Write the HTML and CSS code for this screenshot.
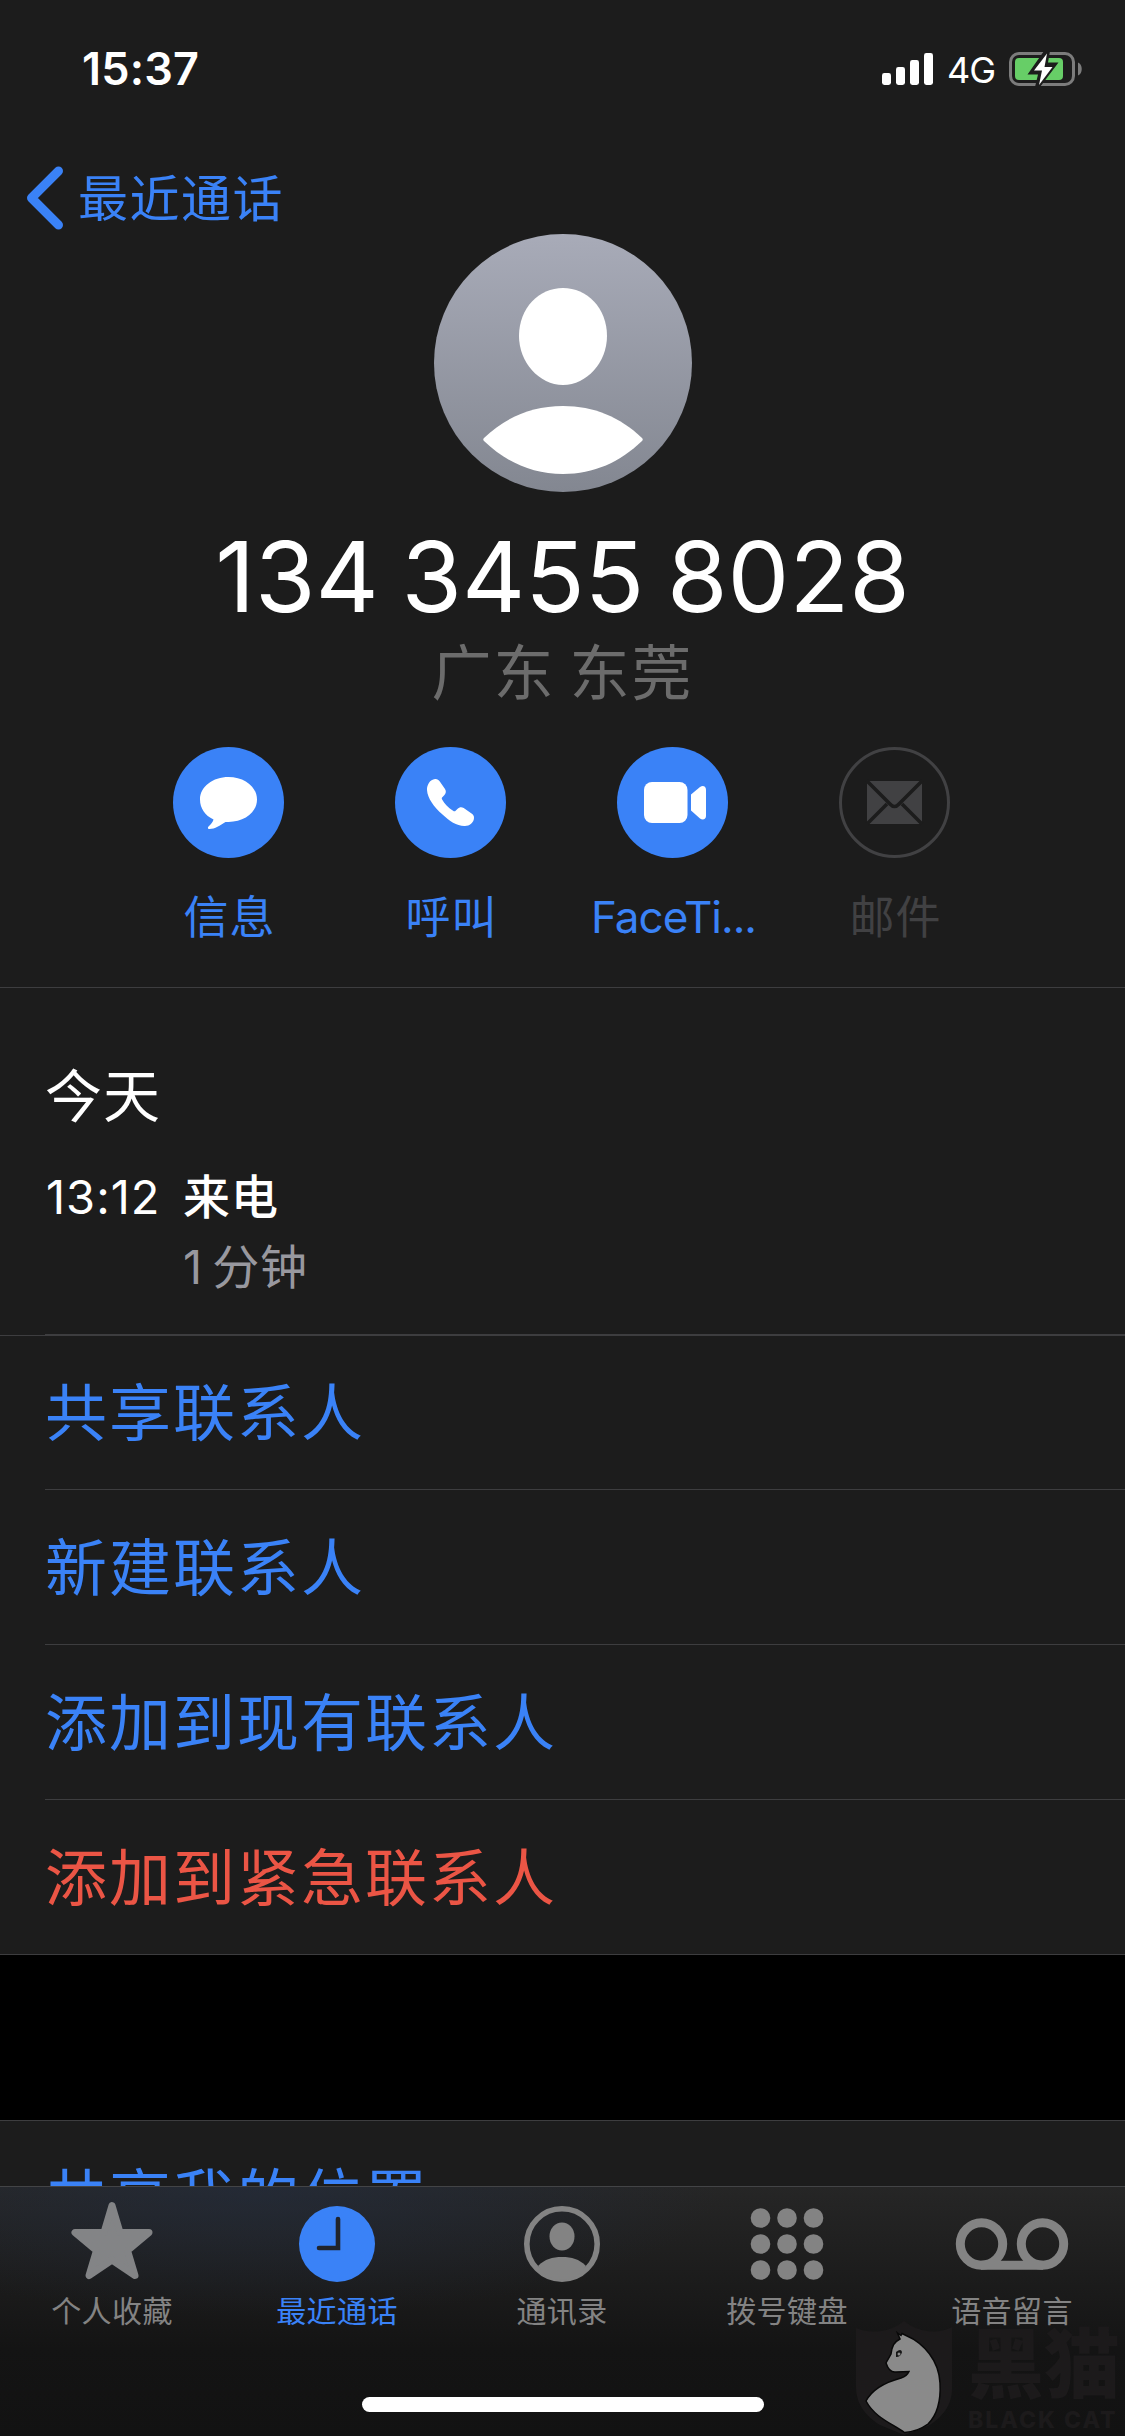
FILE: index.html
```html
<!DOCTYPE html>
<html lang="zh-CN">
<head>
<meta charset="utf-8">
<title>最近通话</title>
<link rel="stylesheet" href="styles.css">
</head>
<body>
<div class="phone">
  <header class="status">
    <span class="clock">15:37</span>
    <div class="status-right">
      <svg class="signal" width="51" height="32" viewBox="0 0 51 32" fill="#fff"><rect x="0" y="20" width="9" height="12" rx="2.4"/><rect x="14" y="14" width="9" height="18" rx="2.4"/><rect x="28" y="7" width="9" height="25" rx="2.4"/><rect x="42" y="0" width="9" height="32" rx="2.4"/></svg>
      <span class="network">4G</span>
      <svg class="battery" width="74" height="36" viewBox="0 0 74 36">
        <rect x="1.5" y="2.5" width="63" height="31" rx="8.5" fill="none" stroke="#7c7c7c" stroke-width="3"/>
        <path d="M69 11.5c5 2 5 11 0 13z" fill="#7c7c7c"/>
        <rect x="6" y="7" width="48" height="22" rx="4" fill="#67ce67"/>
        <path d="M35 0L18.500 23.500H29L26 36h5l18.500-24.500H39L41 0z" fill="#1c1c1c"/>
        <path d="M38 2.500L25 19.500h8L30 34l13.500-18h-8z" fill="#fff"/>
      </svg>
    </div>
  </header>

  <nav class="back">
    <svg width="38" height="64" viewBox="0 0 38 64" fill="none" stroke="#3a82f7" stroke-width="9" stroke-linecap="round" stroke-linejoin="round"><path d="M32.5 5L5.500 32l27 27"/></svg>
    <span>最近通话</span>
  </nav>

  <section class="profile">
    <svg class="avatar" width="258" height="258" viewBox="0 0 258 258">
      <defs><linearGradient id="av" x1="0" y1="0" x2="0" y2="1"><stop offset="0" stop-color="#a8abb8"/><stop offset="1" stop-color="#838791"/></linearGradient></defs>
      <circle cx="129" cy="129" r="129" fill="url(#av)"/>
      <path d="M129 54c24 0 44 20 44 48 0 26-20 49-44 49s-44-23-44-49c0-28 20-48 44-48z" fill="#fff"/>
      <path d="M50 204c22-21 48-32 79-32s57 11 79 32q1.500 1.500 0 3c-22 21-48 33-79 33s-57-12-79-33q-1.500-1.500 0-3z" fill="#fff"/>
    </svg>
    <h1 class="number">134 3455 8028</h1>
    <p class="place">广东 东莞</p>
    <div class="actions">
      <div class="action">
        <svg width="111" height="111" viewBox="0 0 111 111"><circle cx="55.500" cy="55.500" r="55.500" fill="#3a82f7"/><path d="M55.500 30C71 30 84 39.500 84 52.500S71 75 55.500 75h-3C47 78.500 42 82 36.500 82c-1.800 0-2-1.500-1-2.600C38 77 40 75 40.500 72.500 32 68.500 27 61 27 52.500 27 39.500 40 30 55.500 30z" fill="#fff"/></svg>
        <span>信息</span>
      </div>
      <div class="action">
        <svg width="111" height="111" viewBox="0 0 111 111"><circle cx="55.500" cy="55.500" r="55.500" fill="#3a82f7"/><path d="M40 32c2-.3 3.600.8 4.800 2.500l5.200 7.500c1.500 2.200 1 4.500-1 6.500l-1.700 1.700c-.7.800-.6 1.500-.2 2.300 2.400 4.500 6.500 8.500 11 11.300.9.600 1.700.8 2.500 0l1.800-1.700c2-2 4-2.500 6.300-1l7.500 5.200c2.200 1.600 2.900 2.500 2.800 4.700-.2 4.500-4.500 8-9 8-8 .3-15.500-5-22.500-11.500C39 60 32.500 51.500 32 43c-.2-5 3-10.600 8-11z" fill="#fff"/></svg>
        <span>呼叫</span>
      </div>
      <div class="action">
        <svg width="111" height="111" viewBox="0 0 111 111"><circle cx="55.500" cy="55.500" r="55.500" fill="#3a82f7"/><rect x="27" y="35" width="43.500" height="41" rx="8" fill="#fff"/><path d="M74 47.500l9-7.500c3-2.300 6-.5 6 2.500v26.500c0 3-3 4.500-6 2.500l-9-8z" fill="#fff"/></svg>
        <span class="latin">FaceTi...</span>
      </div>
      <div class="action disabled">
        <svg width="111" height="111" viewBox="0 0 111 111"><circle cx="55.500" cy="55.500" r="54" fill="none" stroke="#414143" stroke-width="3"/><rect x="28" y="34" width="55" height="43" rx="3" fill="#414143"/><path d="M27.500 33.500L51 57q4.500 5 9 0l23.500-23.500M28 77l20-20M83 77L63 57" fill="none" stroke="#1c1c1c" stroke-width="3.600"/></svg>
        <span>邮件</span>
      </div>
    </div>
  </section>

  <section class="history">
    <h2>今天</h2>
    <div class="call">
      <span class="time">13:12</span>
      <div class="call-info">
        <strong>来电</strong>
        <span class="duration"><span class="count">1</span>分钟</span>
      </div>
    </div>
  </section>

  <ul class="options">
    <li>共享联系人</li>
    <li>新建联系人</li>
    <li>添加到现有联系人</li>
    <li class="danger">添加到紧急联系人</li>
  </ul>

  <div class="gap"></div>
  <div class="location">共享我的位置</div>

  <footer class="tabs">
    <div class="tab-row">
      <div class="tab">
        <svg width="84" height="84" viewBox="0 0 84 84"><path d="M42 5.500L50 32.500H79L57.500 50.500 65 75.500 42 60 19 75.500 26.500 50.500 5 32.500H34z" fill="#838486" stroke="#838486" stroke-width="7" stroke-linejoin="round"/></svg>
        <span>个人收藏</span>
      </div>
      <div class="tab active">
        <svg width="84" height="84" viewBox="0 0 84 84"><circle cx="42" cy="44" r="38" fill="#3a82f7"/><path d="M43 19V48H24" fill="none" stroke="#20242c" stroke-width="4.600" stroke-linecap="round"/></svg>
        <span>最近通话</span>
      </div>
      <div class="tab">
        <svg width="84" height="84" viewBox="0 0 84 84"><circle cx="42" cy="44" r="35.200" fill="none" stroke="#838383" stroke-width="5.600"/><ellipse cx="42" cy="36.500" rx="12.500" ry="14" fill="#838383"/><path d="M18 66C25 59 32 57 42 57s17 2 24 9C60 75 52 80 42 80S24 75 18 66z" fill="#838383"/></svg>
        <span>通讯录</span>
      </div>
      <div class="tab">
        <svg width="84" height="84" viewBox="0 0 84 84" fill="#838383"><circle cx="15.500" cy="18" r="9.800"/><circle cx="42" cy="18" r="9.800"/><circle cx="68.500" cy="18" r="9.800"/><circle cx="15.500" cy="44" r="9.800"/><circle cx="42" cy="44" r="9.800"/><circle cx="68.500" cy="44" r="9.800"/><circle cx="15.500" cy="70" r="9.800"/><circle cx="42" cy="70" r="9.800"/><circle cx="68.500" cy="70" r="9.800"/></svg>
        <span>拨号键盘</span>
      </div>
      <div class="tab">
        <svg width="114" height="84" viewBox="0 0 114 84" fill="none" stroke="#838383" stroke-width="9"><circle cx="26.500" cy="44" r="21.200"/><circle cx="87.500" cy="44" r="21.200"/><path d="M26 65.200H88"/></svg>
        <span>语音留言</span>
      </div>
    </div>
    <div class="home-bar"></div>
    <div class="brand">
      <svg width="98" height="114" viewBox="0 0 98 114">
        <path d="M1 7q12 5 25 3 13-2 23-10 10 8 23 10 13 2 25-4V68c0 18-12 30-24 37l-24 9-24-10C12 96 1 84 1 66z" fill="#1c1a1b"/>
        <path d="M42.500 12l3.500 2.500 1-2 4 2C69 22 84 40 85 62c1 18-3 32-12 41-7 5-15 8-23.500 8.500C38 103 20 97 11 80c7-13 20-19 35-23q6-2 8-6.500l-13 .5c-6 1-9-6-10-9l5-9c1-8 3-12 9-15z" fill="#8a8a8a" stroke="#080808" stroke-width="1.500"/>
        <path d="M41 31q5-4 6 0-1 5-6 5z" fill="#151515"/><circle cx="44" cy="33" r="1.500" fill="#8a8a8a"/>
      </svg>
      <div class="brand-text"><b>黑猫</b><i>BLACK CAT</i></div>
    </div>
  </footer>
</div>
</body>
</html>
```
FILE: styles.css
```css
* { box-sizing: border-box; margin: 0; padding: 0; }

body {
  width: 1125px;
  height: 2436px;
  overflow: hidden;
  background: #000;
  color: #fff;
  font-family: Inter, "Noto Sans CJK SC", sans-serif;
}

svg { display: block; flex: none; }

.phone {
  display: flex;
  flex-direction: column;
  height: 2436px;
  overflow: hidden;
  background: #1c1c1c;
}

.status {
  display: flex;
  justify-content: space-between;
  flex: none;
  height: 150px;
  padding: 40px 42px 0 82px;
}
.clock { font-size: 45px; line-height: 58px; font-weight: 600; letter-spacing: 0.2px; }
.status-right { display: flex; align-items: flex-start; }
.signal { margin-top: 13px; }
.network { margin: 8px 0 0 14px; width: 62px; font-size: 36px; line-height: 44px; letter-spacing: -1px; }
.battery { margin-top: 11px; }

.back {
  display: flex;
  align-items: center;
  flex: none;
  gap: 14px;
  height: 84px;
  padding: 12px 0 0 26px;
  color: #3a82f7;
  font-size: 50px;
  line-height: 72px;
  letter-spacing: 1.5px;
}
.back span { padding-top: 2px; }

.profile {
  display: flex;
  flex-direction: column;
  align-items: center;
  flex: none;
  height: 754px;
  border-bottom: 1px solid #3d3d3f;
}
.number {
  margin-top: 25px;
  font-size: 98px;
  line-height: 120px;
  font-weight: 400;
  word-spacing: -5px;
  white-space: nowrap;
}
.place { margin-top: -8px; color: #6c6c6c; font-size: 60px; line-height: 88px; letter-spacing: 2px; word-spacing: -5px; }

.actions { display: grid; grid-template-columns: repeat(4, 222px); margin: 30px 2px 0 0; }
.action {
  display: flex;
  flex-direction: column;
  align-items: center;
  gap: 28px;
  color: #3a82f7;
  font-size: 45px;
  line-height: 64px;
  letter-spacing: 1px;
}
.action span { padding-left: 2px; }
.action .latin { margin-top: -1px; letter-spacing: -1px; font-size: 44px; }
.action.disabled { color: #414143; }

.history { flex: none; height: 348px; padding: 67px 0 0 45px; border-bottom: 1px solid #3d3d3f; }
.history h2 { font-size: 57px; line-height: 84px; font-weight: 400; letter-spacing: 1px; }
.call { display: flex; height: 196px; padding-top: 23px; border-bottom: 1px solid #3d3d3f; }
.time { width: 138px; padding-left: 1px; font-size: 47px; line-height: 70px; letter-spacing: 1px; }
.call-info { display: flex; flex-direction: column; font-size: 47px; line-height: 70px; letter-spacing: 1px; }
.call-info strong { font-weight: 500; }
.duration { color: #98989f; }
.count { margin-right: 9px; }

.options { list-style: none; flex: none; padding-left: 45px; }
.options li,
.location {
  height: 155px;
  line-height: 158px;
  color: #3a82f7;
  font-size: 62px;
  letter-spacing: 2px;
}
.options li:first-child { height: 153px; line-height: 156px; }
.options li + li { border-top: 1px solid #3d3d3f; }
.options .danger { color: #eb5545; }

.gap { flex: none; height: 166px; background: #000; border-top: 1px solid #3d3d3f; }
.location { flex: none; height: 66px; line-height: 156px; padding-left: 45px; border-top: 1px solid #3d3d3f; overflow: hidden; }

.tabs {
  position: relative;
  flex: none;
  height: 250px;
  border-top: 1px solid #434446;
  background:
    radial-gradient(ellipse 460px 130px at 260px 0, rgba(35, 45, 64, 0.6), rgba(35, 45, 64, 0)),
    linear-gradient(#262626, #1b1b1b 40%, #141414 65%, #121212);
}
.tab-row { display: grid; grid-template-columns: repeat(5, 1fr); }
.tab {
  display: flex;
  flex-direction: column;
  align-items: center;
  padding: 13px 1px 0 0;
  color: #838383;
  font-size: 30px;
  line-height: 40px;
  letter-spacing: 0.4px;
}
.tab span { margin-top: 7px; }
.tab.active { color: #3a82f7; }
.home-bar { width: 402px; height: 15px; margin: 66px auto 0; border-radius: 8px; background: #fff; }

.brand { position: absolute; left: 855px; top: 134px; display: flex; gap: 15px; color: #1c1a1b; }
.brand-text { display: flex; flex-direction: column; padding-top: 10px; white-space: nowrap; }
.brand b { font-size: 76px; line-height: 66px; font-weight: 900; }
.brand i { margin-top: 11px; font: 800 23px/24px Inter, sans-serif; letter-spacing: 2px; }
```
